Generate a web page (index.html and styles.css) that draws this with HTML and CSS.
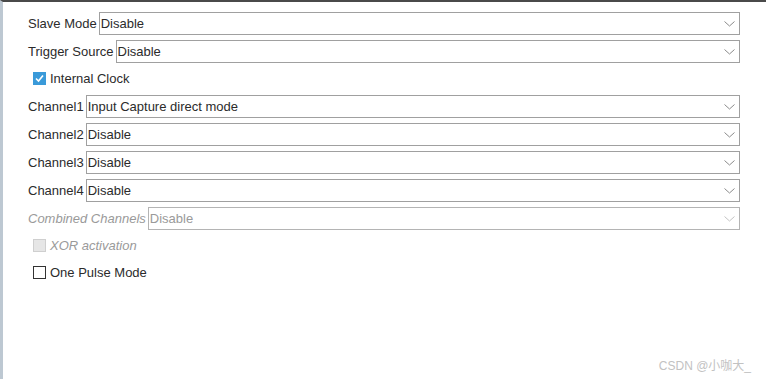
FILE: index.html
```html
<!DOCTYPE html>
<html lang="en">
<head>
  <meta charset="UTF-8">
  <title>Mode</title>
  <link rel="stylesheet" href="styles.css">
</head>
<body>
  <div class="panel">
    <div class="row">
      <label>Slave Mode</label>
      <div class="select"><span>Disable</span><svg class="chev" width="11" height="6" viewBox="0 0 11 6"><path d="M0.5 0.5 L5.5 5 L10.5 0.5" /></svg></div>
    </div>
    <div class="row">
      <label>Trigger Source</label>
      <div class="select"><span>Disable</span><svg class="chev" width="11" height="6" viewBox="0 0 11 6"><path d="M0.5 0.5 L5.5 5 L10.5 0.5" /></svg></div>
    </div>
    <div class="row check-row">
      <span class="box checked"><svg width="13" height="13" viewBox="0 0 13 13"><path d="M3 6.5 L5.5 9 L10 3.5" /></svg></span>
      <label>Internal Clock</label>
    </div>
    <div class="row">
      <label>Channel1</label>
      <div class="select"><span>Input Capture direct mode</span><svg class="chev" width="11" height="6" viewBox="0 0 11 6"><path d="M0.5 0.5 L5.5 5 L10.5 0.5" /></svg></div>
    </div>
    <div class="row">
      <label>Channel2</label>
      <div class="select"><span>Disable</span><svg class="chev" width="11" height="6" viewBox="0 0 11 6"><path d="M0.5 0.5 L5.5 5 L10.5 0.5" /></svg></div>
    </div>
    <div class="row">
      <label>Channel3</label>
      <div class="select"><span>Disable</span><svg class="chev" width="11" height="6" viewBox="0 0 11 6"><path d="M0.5 0.5 L5.5 5 L10.5 0.5" /></svg></div>
    </div>
    <div class="row">
      <label>Channel4</label>
      <div class="select"><span>Disable</span><svg class="chev" width="11" height="6" viewBox="0 0 11 6"><path d="M0.5 0.5 L5.5 5 L10.5 0.5" /></svg></div>
    </div>
    <div class="row disabled">
      <label>Combined Channels</label>
      <div class="select"><span>Disable</span><svg class="chev" width="11" height="6" viewBox="0 0 11 6"><path d="M0.5 0.5 L5.5 5 L10.5 0.5" /></svg></div>
    </div>
    <div class="row check-row disabled">
      <span class="box"></span>
      <label>XOR activation</label>
    </div>
    <div class="row check-row">
      <span class="box"></span>
      <label>One Pulse Mode</label>
    </div>
  </div>
  <div class="watermark">CSDN @小咖大_</div>
</body>
</html>
```

FILE: styles.css
```css
html, body {
  margin: 0;
  height: 100%;
}
body {
  font-family: "Liberation Sans", Arial, "Noto Sans CJK SC", sans-serif;
  font-size: 13px;
  color: #2b2b2b;
  background: #fff;
  border-left: 3px solid #bdc8d2;
  border-top: 2px solid #4a4a4a;
  box-sizing: border-box;
  position: relative;
  overflow: hidden;
}
.panel {
  padding: 10px 26px 0 25px;
  display: flex;
  flex-direction: column;
  gap: 5px;
}
.row {
  display: flex;
  align-items: center;
  height: 23px;
}
.row label {
  white-space: nowrap;
  margin-right: 2px;
}
.select {
  flex: 1;
  height: 23px;
  box-sizing: border-box;
  border: 1px solid #a0a0a0;
  display: flex;
  align-items: center;
  justify-content: space-between;
  padding: 0 4px 0 1px;
}
.chev path {
  fill: none;
  stroke: #8a8a8a;
  stroke-width: 1;
}
.disabled label {
  color: #9a9a9a;
  font-style: italic;
}
.disabled .select {
  color: #9a9a9a;
  border-color: #b4b4b4;
}
.disabled .chev path {
  stroke: #c4c4c4;
}
.check-row {
  height: 22px;
  box-sizing: border-box;
  align-items: flex-start;
  padding: 4px 0 0 5px;
}
.check-row label {
  line-height: 13px;
}
.box {
  width: 13px;
  height: 13px;
  box-sizing: border-box;
  border: 1px solid #333;
  background: #fff;
  margin-right: 4px;
  display: flex;
}
.box.checked {
  background: #3a9ad9;
  border-color: #3a9ad9;
}
.box.checked svg {
  margin: -1px;
}
.box.checked path {
  fill: none;
  stroke: #fff;
  stroke-width: 1.6;
}
.disabled .box {
  background: #e6e6e6;
  border-color: #cfcfcf;
}
.watermark {
  position: absolute;
  right: 15px;
  bottom: 6px;
  font-size: 12px;
  color: #c2c2c2;
}
```
